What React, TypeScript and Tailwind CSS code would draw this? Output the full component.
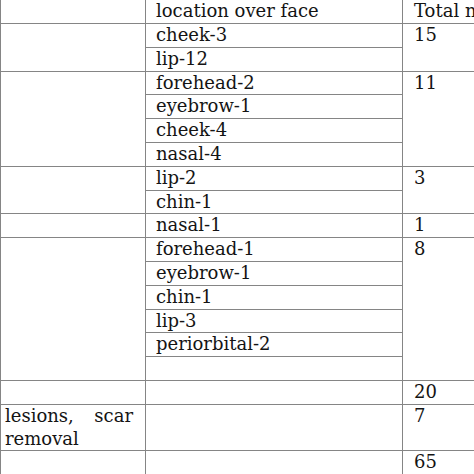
import React from "react";

type Group = {
  left: string;
  sites: string[];
  total: string;
};

const groups: Group[] = [
  { left: "", sites: ["cheek-3", "lip-12"], total: "15" },
  { left: "", sites: ["forehead-2", "eyebrow-1", "cheek-4", "nasal-4"], total: "11" },
  { left: "", sites: ["lip-2", "chin-1"], total: "3" },
  { left: "", sites: ["nasal-1"], total: "1" },
  {
    left: "",
    sites: ["forehead-1", "eyebrow-1", "chin-1", "lip-3", "periorbital-2", ""],
    total: "8",
  },
  { left: "", sites: [""], total: "20" },
  { left: "lesions, scar removal", sites: [""], total: "7" },
  { left: "", sites: [""], total: "65" },
];

const cell = "border border-[#858585] align-top leading-[22.8px] p-0";

export default function App() {
  return (
    <div
      className="w-[474px] h-[474px] overflow-hidden bg-white text-[#141414]"
      style={{ fontFamily: '"DejaVu Serif", serif' }}
    >
      <table className="table-fixed border-collapse text-[18px] w-[560px]">
        <colgroup>
          <col className="w-[145px]" />
          <col className="w-[257px]" />
          <col className="w-[158px]" />
        </colgroup>
        <tbody>
          <tr className="h-[23.5px]">
            <td className={`${cell} border-t-0`}>&nbsp;</td>
            <td className={`${cell} border-t-0 pl-[10px]`}>location over face</td>
            <td className={`${cell} border-t-0 pl-[11px] whitespace-nowrap`}>Total no.</td>
          </tr>
          {groups.map((g, gi) =>
            g.sites.map((site, si) => (
              <tr key={`${gi}-${si}`} className="h-[23.8px]">
                {si === 0 && (
                  <td
                    rowSpan={g.sites.length}
                    className={`${cell} pl-[4px] pr-[12px] text-justify`}
                  >
                    {g.left || "\u00a0"}
                  </td>
                )}
                <td className={`${cell} pl-[10px]`}>{site || "\u00a0"}</td>
                {si === 0 && (
                  <td rowSpan={g.sites.length} className={`${cell} pl-[11px]`}>
                    {g.total}
                  </td>
                )}
              </tr>
            ))
          )}
        </tbody>
      </table>
    </div>
  );
}
